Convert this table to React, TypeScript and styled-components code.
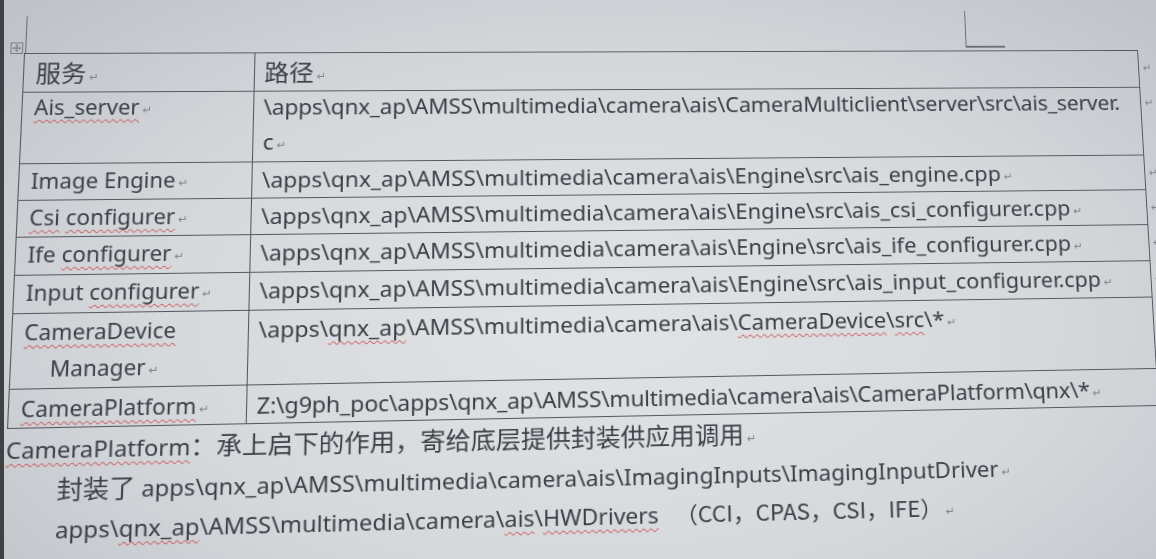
import React from 'react'
import styled, { createGlobalStyle, css } from 'styled-components'

const GlobalStyle = createGlobalStyle`
  html, body {
    margin: 0;
    padding: 0;
    background: #d4d7db;
  }
`

type Pt = [number, number]

// flat page rect of the table -> where the photographed table corners sit
const FLAT = { x: 24, y: 53, w: 1114, h: 375 }
const CORNERS: Pt[] = [
  [24, 53],
  [1138, 50],
  [1159, 405],
  [7, 428],
]

const squareToQuad = (q: Pt[]) => {
  const [[x0, y0], [x1, y1], [x2, y2], [x3, y3]] = q
  const dx1 = x1 - x2
  const dx2 = x3 - x2
  const dx3 = x0 - x1 + x2 - x3
  const dy1 = y1 - y2
  const dy2 = y3 - y2
  const dy3 = y0 - y1 + y2 - y3
  const den = dx1 * dy2 - dx2 * dy1
  const g = (dx3 * dy2 - dx2 * dy3) / den
  const h = (dx1 * dy3 - dx3 * dy1) / den
  return {
    a: x1 - x0 + g * x1,
    b: x3 - x0 + h * x3,
    c: x0,
    d: y1 - y0 + g * y1,
    e: y3 - y0 + h * y3,
    f: y0,
    g,
    h,
  }
}

const perspectiveMatrix = () => {
  const { a, b, c, d, e, f, g, h } = squareToQuad(CORNERS)
  const { x: sx, y: sy, w: sw, h: sh } = FLAT
  const A = a / sw
  const B = b / sh
  const C = c - (a * sx) / sw - (b * sy) / sh
  const D = d / sw
  const E = e / sh
  const F = f - (d * sx) / sw - (e * sy) / sh
  const G = g / sw
  const H = h / sh
  const I = 1 - (g * sx) / sw - (h * sy) / sh
  const m = [A, D, 0, G, B, E, 0, H, 0, 0, 1, 0, C, F, 0, I].map((v) => v / I)
  return `matrix3d(${m.join(',')})`
}

const INK = '#3a3e46'
const RULE = '#53575d'

const Page = styled.div`
  position: relative;
  width: 1156px;
  height: 559px;
  overflow: hidden;
  background: radial-gradient(ellipse 70% 80% at 52% 58%, #e1e3e5 0%, #d6d9dc 55%, #bfc3c9 100%);
  font-family: 'Noto Sans', 'Noto Sans CJK SC', sans-serif;
  color: ${INK};
`

const Bezel = styled.div`
  position: absolute;
  left: 0;
  top: 0;
  bottom: 0;
  width: 4px;
  background: #3f4145;
  z-index: 2;
`

const Sheet = styled.div<{ $m: string }>`
  width: 1156px;
  display: flex;
  flex-direction: column;
  transform-origin: 0 0;
  transform: ${(p) => p.$m};
  filter: blur(0.3px);
`

const TopMarks = styled.div`
  display: flex;
  height: 53px;
`

const LeftCrop = styled.div`
  margin-left: 25px;
  margin-top: 15px;
  width: 1px;
  background: #6a6e74;
`

const RightCrop = styled.div`
  margin-left: 932px;
  margin-top: 10px;
  width: 40px;
  height: 38px;
  border-left: 1px solid #6a6e74;
  border-bottom: 2px solid #6a6e74;
`

const TableWrap = styled.div`
  position: relative;
  margin-left: 24px;
`

const Handle = styled.div`
  position: absolute;
  left: -13px;
  top: -11px;
  width: 10px;
  height: 10px;
  border: 1px solid #7a7e84;
  display: flex;
  align-items: center;
  justify-content: center;
`

const Cell = styled.div<{ $lead?: boolean }>`
  box-sizing: border-box;
  border-right: 1px solid ${RULE};
  border-bottom: 1px solid ${RULE};
  ${(p) => p.$lead && `border-left: 1px solid ${RULE};`}
  padding-left: ${(p) => (p.$lead ? 11 : 9)}px;
  font-size: ${(p) => (p.$lead ? 21 : 22)}px;
  white-space: nowrap;
`

const Outside = styled.div`
  padding-left: 1px;
`

const Row = styled.div<{ $h: number; $pt: number; $lh?: number; $top?: boolean }>`
  display: grid;
  grid-template-columns: 222px 892px 24px;
  height: ${(p) => p.$h}px;
  line-height: ${(p) => p.$lh ?? 35}px;
  & > ${Cell}, & > ${Outside} {
    padding-top: ${(p) => p.$pt}px;
  }
  ${(p) =>
    p.$top &&
    css`
      & > ${Cell} {
        border-top: 1px solid ${RULE};
      }
    `}
`

const Han = styled.span<{ $size?: number }>`
  font-family: 'Noto Sans CJK SC', sans-serif;
  font-size: ${(p) => p.$size ?? 24}px;
`

const Tight = styled.span`
  letter-spacing: -0.2px;
`

const Squiggle = styled.span`
  text-decoration: underline wavy #cc4b4b;
  text-decoration-thickness: 1px;
  text-underline-offset: 4px;
  text-decoration-skip-ink: none;
`

const Para = styled.span`
  display: inline-block;
  margin-left: 3px;
  font-family: 'DejaVu Sans', sans-serif;
  font-size: 11px;
  line-height: 1;
  color: #80848a;
  vertical-align: 1px;
  letter-spacing: 0;
`

const Indent = styled.span`
  display: inline-block;
  padding-left: 25px;
`

const Notes = styled.div`
  margin-left: 24px;
  font-size: 22px;
  line-height: 37px;
  white-space: nowrap;
`

const NoteLine = styled.div<{ $indent?: number }>`
  padding-left: ${(p) => p.$indent ?? 0}px;
`

const Gap = styled.span`
  display: inline-block;
  width: 16px;
`

const MoveIcon = () => (
  <svg width="8" height="8" viewBox="0 0 8 8" fill="none" stroke="#666a70" strokeWidth="0.9">
    <path d="M4 0.5V7.5M0.5 4H7.5" />
    <path d="M3 1.5L4 0.5L5 1.5M3 6.5L4 7.5L5 6.5M1.5 3L0.5 4L1.5 5M6.5 3L7.5 4L6.5 5" />
  </svg>
)

const P = () => <Para>↵</Para>

type RowSpec = {
  h: number
  pt: number
  lh?: number
  name: React.ReactNode
  path: React.ReactNode
}

const base = '\\apps\\qnx_ap\\AMSS\\multimedia\\camera\\ais\\'

const rows: RowSpec[] = [
  { h: 36, pt: 1, name: <Han>服务</Han>, path: <Han>路径</Han> },
  {
    h: 78,
    pt: 2,
    lh: 36,
    name: <Squiggle>Ais_server</Squiggle>,
    path: (
      <>
        <Tight>{base}CameraMulticlient\server\src\ais_server.</Tight>
        <br />c
      </>
    ),
  },
  { h: 37, pt: 0, name: 'Image Engine', path: `${base}Engine\\src\\ais_engine.cpp` },
  {
    h: 37,
    pt: 0,
    name: (
      <>
        <Squiggle>Csi</Squiggle> <Squiggle>configurer</Squiggle>
      </>
    ),
    path: `${base}Engine\\src\\ais_csi_configurer.cpp`,
  },
  {
    h: 38,
    pt: 0,
    name: (
      <>
        Ife <Squiggle>configurer</Squiggle>
      </>
    ),
    path: `${base}Engine\\src\\ais_ife_configurer.cpp`,
  },
  {
    h: 38,
    pt: 0,
    name: (
      <>
        Input <Squiggle>configurer</Squiggle>
      </>
    ),
    path: `${base}Engine\\src\\ais_input_configurer.cpp`,
  },
  {
    h: 74,
    pt: 0,
    lh: 36,
    name: (
      <>
        <Squiggle>CameraDevice</Squiggle>
        <br />
        <Indent>Manager</Indent>
      </>
    ),
    path: (
      <>
        \apps\<Squiggle>qnx_ap</Squiggle>\AMSS\multimedia\camera\ais\<Squiggle>CameraDevice</Squiggle>\
        <Squiggle>src</Squiggle>\*
      </>
    ),
  },
  {
    h: 38,
    pt: 2,
    name: <Squiggle>CameraPlatform</Squiggle>,
    path: (
      <Tight>Z:\g9ph_poc\apps\qnx_ap\AMSS\multimedia\camera\ais\CameraPlatform\qnx\*</Tight>
    ),
  },
]

export default function App() {
  const matrix = perspectiveMatrix()
  return (
    <>
      <GlobalStyle />
      <Page>
        <Bezel />
        <Sheet $m={matrix}>
          <TopMarks>
            <LeftCrop />
            <RightCrop />
          </TopMarks>
          <TableWrap>
            <Handle>
              <MoveIcon />
            </Handle>
            {rows.map((r, i) => (
              <Row key={i} $h={r.h} $pt={r.pt} $lh={r.lh} $top={i === 0}>
                <Cell $lead>
                  {r.name}
                  <P />
                </Cell>
                <Cell>
                  {r.path}
                  <P />
                </Cell>
                <Outside>
                  <P />
                </Outside>
              </Row>
            ))}
          </TableWrap>
          <Notes>
            <NoteLine>
              <Squiggle>CameraPlatform</Squiggle>
              <Han>：承上启下的作用，寄给底层提供封装供应用调用</Han>
              <P />
            </NoteLine>
            <NoteLine $indent={48}>
              <Han>封装了</Han> apps\qnx_ap\AMSS\multimedia\camera\ais\ImagingInputs\ImagingInputDriver
              <P />
            </NoteLine>
            <NoteLine $indent={48}>
              apps\<Squiggle>qnx_ap</Squiggle>\AMSS\multimedia\camera\<Squiggle>ais</Squiggle>\
              <Squiggle>HWDrivers</Squiggle>
              <Gap />
              <Han $size={22}>（CCI，CPAS，CSI，IFE）</Han>
              <P />
            </NoteLine>
          </Notes>
        </Sheet>
      </Page>
    </>
  )
}
